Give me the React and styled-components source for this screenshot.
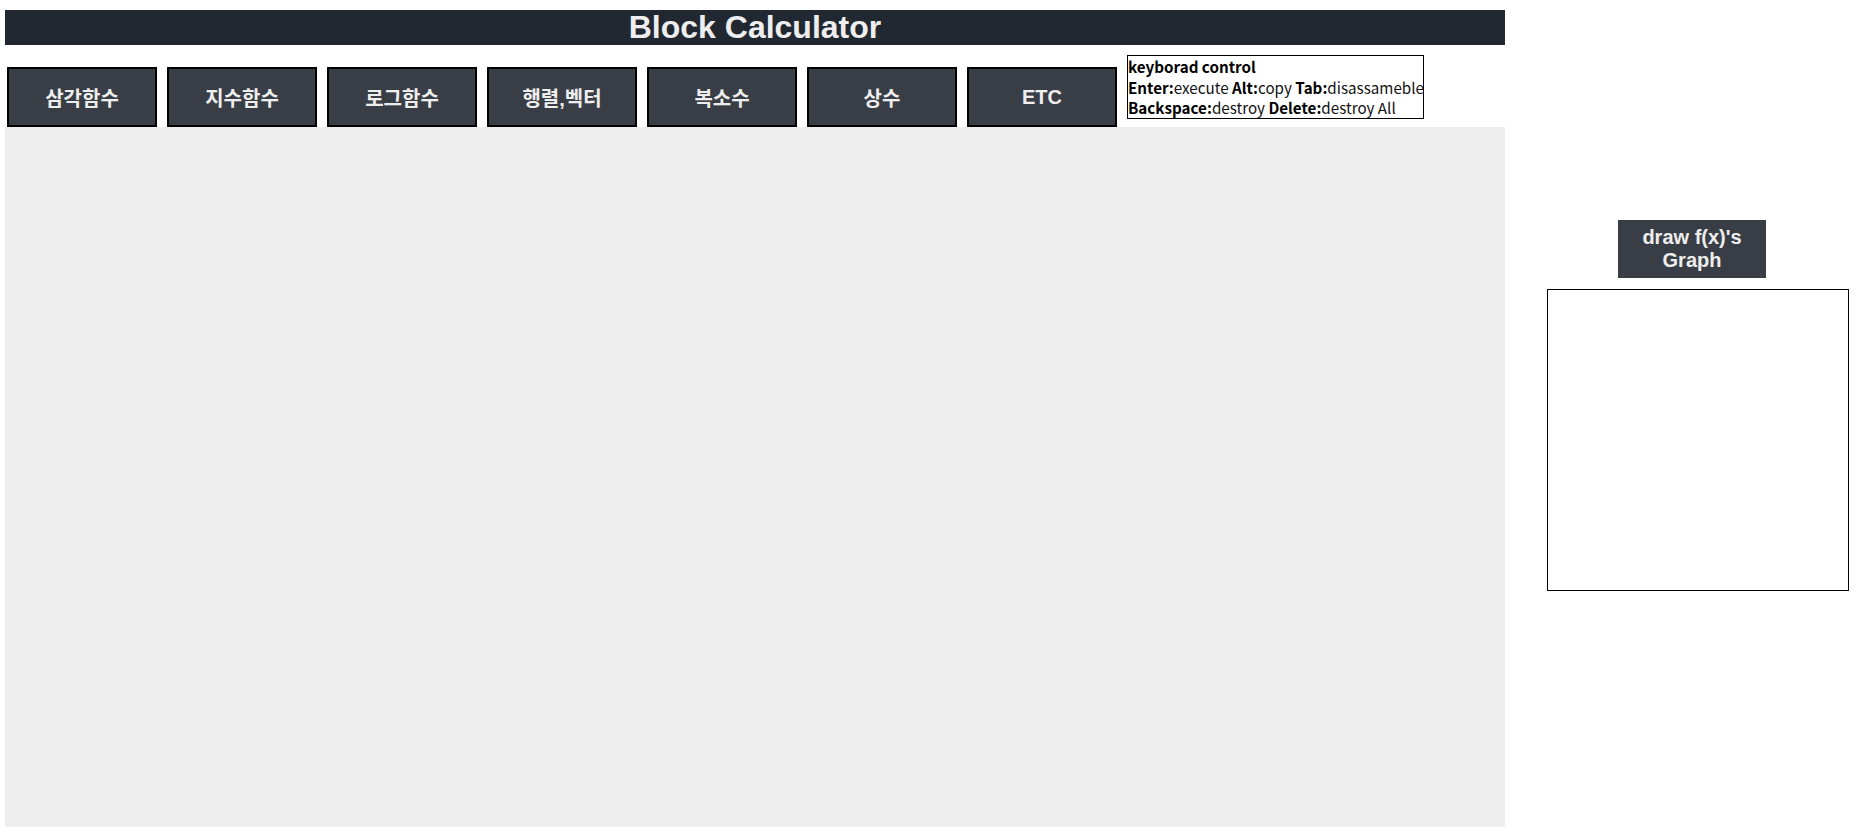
import React from 'react';
import styled, { createGlobalStyle } from 'styled-components';

const GlobalStyle = createGlobalStyle`
    body {
        margin: 0;
        background: #ffffff;
        font-family: "Liberation Sans", Arial, "Noto Sans CJK KR", sans-serif;
    }
`;

const Page = styled.div`
    display: flex;
    align-items: flex-start;
    padding: 10px 0 0 5px;
`;

const MainColumn = styled.div`
    width: 1500px;
    display: flex;
    flex-direction: column;
`;

const Title = styled.h1`
    margin: 0;
    height: 35px;
    line-height: 35px;
    background: #222831;
    color: #eeeeee;
    text-align: center;
    font-size: 32px;
    font-weight: bold;
`;

const Toolbar = styled.div`
    height: 82px;
    display: flex;
    align-items: flex-end;
    gap: 10px;
    padding-left: 2px;
`;

const MenuButton = styled.button`
    box-sizing: border-box;
    width: 150px;
    height: 60px;
    background: #393e46;
    color: #eeeeee;
    border: 2px solid #000000;
    font-family: "Liberation Sans", Arial, "Noto Sans CJK KR", sans-serif;
    font-size: 20px;
    font-weight: bold;
    padding: 0;
    cursor: pointer;
`;

const KeyHelp = styled.div`
    box-sizing: border-box;
    width: 297px;
    height: 64px;
    margin-bottom: 8px;
    border: 1px solid #000000;
    font-family: "Noto Sans CJK KR", "Noto Sans", sans-serif;
    font-size: 15.2px;
    line-height: 20.7px;
    color: #111111;
    white-space: nowrap;
    overflow: hidden;

    b {
        font-weight: bold;
        color: #000000;
    }
`;

const Workspace = styled.div`
    height: 700px;
    background: #eeeeee;
`;

const SideColumn = styled.div`
    width: 359px;
    display: flex;
    flex-direction: column;
    align-items: flex-start;
    padding-top: 210px;
`;

const GraphButton = styled.button`
    box-sizing: border-box;
    width: 148px;
    height: 58px;
    margin-left: 113px;
    background: #393e46;
    color: #eeeeee;
    border: none;
    padding: 0 12px;
    font-family: "Liberation Sans", Arial, sans-serif;
    font-size: 20px;
    font-weight: bold;
    line-height: 23px;
    cursor: pointer;
`;

const GraphCanvas = styled.div`
    box-sizing: border-box;
    width: 302px;
    height: 302px;
    margin: 11px 0 0 42px;
    border: 1px solid #000000;
    background: #ffffff;
`;

const menus = ['삼각함수', '지수함수', '로그함수', '행렬,벡터', '복소수', '상수', 'ETC'];

const App = () => {
    return (
        <>
            <GlobalStyle />
            <Page>
                <MainColumn>
                    <Title>Block Calculator</Title>
                    <Toolbar>
                        {menus.map((m) => (
                            <MenuButton key={m}>{m}</MenuButton>
                        ))}
                        <KeyHelp>
                            <b>keyborad control</b>
                            <br />
                            <b>Enter:</b>execute <b>Alt:</b>copy <b>Tab:</b>disassameble
                            <br />
                            <b>Backspace:</b>destroy <b>Delete:</b>destroy All
                        </KeyHelp>
                    </Toolbar>
                    <Workspace />
                </MainColumn>
                <SideColumn>
                    <GraphButton>draw f(x)'s Graph</GraphButton>
                    <GraphCanvas />
                </SideColumn>
            </Page>
        </>
    );
};

export default App;
